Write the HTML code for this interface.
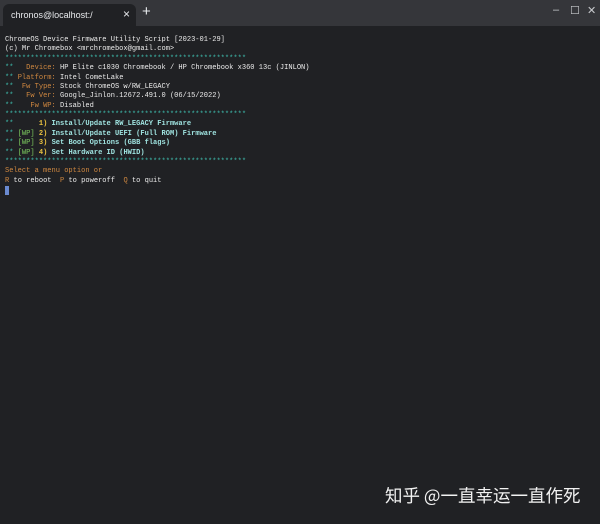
<!DOCTYPE html>
<html><head><meta charset="utf-8"><style>
body{margin:0;width:600px;height:524px;background:#202124;overflow:hidden;position:relative;font-family:"Liberation Sans",sans-serif}
.bar{position:absolute;left:0;top:0;width:600px;height:26px;background:#35363a}
.tab{position:absolute;left:3px;top:4px;width:133px;height:22px;background:#202124;border-radius:6px 6px 0 0;color:#e8eaed;font-size:9px}
.tab span{position:absolute;left:8px;top:6px}
.tab b{position:absolute;right:6px;top:3px;font-size:12px;font-weight:normal}
.plus{position:absolute;left:142px;top:3px;color:#e8eaed;font-size:15px}
.win{position:absolute;top:4px;color:#c8cacd;font-size:11px}
pre{position:absolute;left:5px;top:36px;margin:0;font-family:"Liberation Mono",monospace;font-size:7.05px;line-height:9.38px;color:#ececec}
.c{color:#3fbfb0}.o{color:#d08840}.y{color:#e8c040;font-weight:bold}.w{color:#9fe3e0;font-weight:bold}.g{color:#7fd060}
.cur{display:inline-block;width:4px;height:9px;background:#6a8ad0;vertical-align:top}
.wm{position:absolute;left:385px;top:484px;color:#f2f2f2;font-size:17.5px;white-space:nowrap;font-family:"Noto Sans CJK SC",sans-serif;line-height:24px}
</style></head><body>
<div class="bar"></div>
<div class="tab"><span>chronos@localhost:/</span><b>×</b></div>
<div class="plus">+</div>
<div class="win" style="left:553px">–</div>
<div class="win" style="left:570px">☐</div>
<div class="win" style="left:587px">✕</div>
<pre>
ChromeOS Device Firmware Utility Script [2023-01-29]
(c) Mr Chromebox &lt;mrchromebox@gmail.com&gt;
<span class="c">*********************************************************</span>
<span class="c">**</span><span class="o">   Device: </span>HP Elite c1030 Chromebook / HP Chromebook x360 13c (JINLON)
<span class="c">**</span><span class="o"> Platform: </span>Intel CometLake
<span class="c">**</span><span class="o">  Fw Type: </span>Stock ChromeOS w/RW_LEGACY
<span class="c">**</span><span class="o">   Fw Ver: </span>Google_Jinlon.12672.491.0 (06/15/2022)
<span class="c">**</span><span class="o">    Fw WP: </span>Disabled
<span class="c">*********************************************************</span>
<span class="c">**</span>      <span class="y">1)</span> <span class="w">Install/Update RW_LEGACY Firmware</span>
<span class="c">**</span> <span class="g">[WP]</span> <span class="y">2)</span> <span class="w">Install/Update UEFI (Full ROM) Firmware</span>
<span class="c">**</span> <span class="g">[WP]</span> <span class="y">3)</span> <span class="w">Set Boot Options (GBB flags)</span>
<span class="c">**</span> <span class="g">[WP]</span> <span class="y">4)</span> <span class="w">Set Hardware ID (HWID)</span>
<span class="c">*********************************************************</span>
<span class="o">Select a menu option or</span>
<span class="o">R</span> to reboot  <span class="o">P</span> to poweroff  <span class="o">Q</span> to quit
<span class="cur"></span>
</pre>
<div class="wm">知乎 @一直幸运一直作死</div>
</body></html>
